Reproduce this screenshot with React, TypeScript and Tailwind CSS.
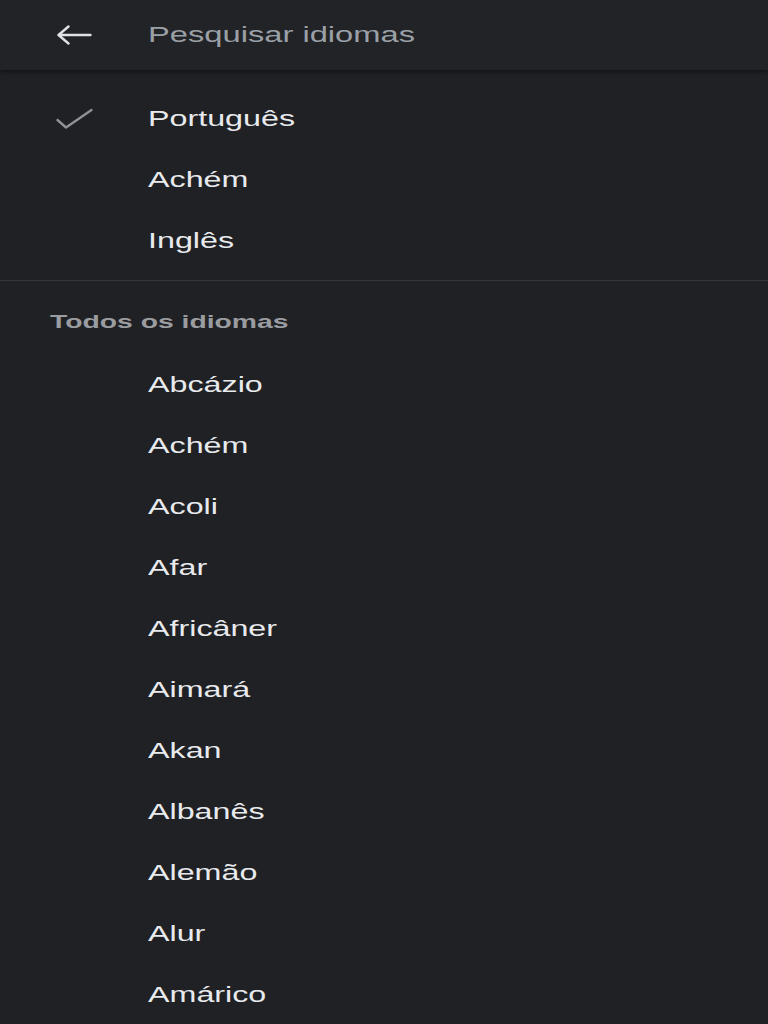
const topLanguages = [
  { name: "Português", selected: true },
  { name: "Achém", selected: false },
  { name: "Inglês", selected: false },
];

const allLanguages = [
  "Abcázio",
  "Achém",
  "Acoli",
  "Afar",
  "Africâner",
  "Aimará",
  "Akan",
  "Albanês",
  "Alemão",
  "Alur",
  "Amárico",
];

// the screenshot is stretched sideways, so text gets a horizontal scale
const Stretched = ({ children, className }: { children: React.ReactNode; className: string }) => (
  <span className={`inline-block origin-left whitespace-nowrap ${className}`}>{children}</span>
);

const LanguageRow = ({ name, selected }: { name: string; selected?: boolean }) => (
  <div className="flex h-[61px] items-center">
    <div className="flex w-[148px] shrink-0 items-center pl-[56px] pt-[4px]">
      {selected && (
        <svg width="37" height="22" viewBox="0 0 37 22" fill="none">
          <path d="M1.5 12 L10 19.5 L35.5 2" stroke="#8e9196" strokeWidth="2.4" strokeLinecap="round" strokeLinejoin="round" />
        </svg>
      )}
    </div>
    <div className="pt-[5px]">
      <Stretched className="scale-x-[1.5] text-[21.5px] text-[#e8eaed]">{name}</Stretched>
    </div>
  </div>
);

export default function App() {
  return (
    <div className="min-h-screen bg-[#202125] font-['Liberation_Sans',Arial,sans-serif]">
      <div className="relative z-10 flex h-[70px] items-center bg-[#222327] shadow-[0_2px_4px_rgba(0,0,0,0.45)]">
        <div className="flex w-[148px] shrink-0 items-center pl-[56px]">
          <svg width="36" height="20" viewBox="0 0 36 20" fill="none">
            <path d="M2.5 10 H34.5 M12.5 1.5 L2.5 10 L12.5 18.5" stroke="#dfe1e4" strokeWidth="2.4" strokeLinecap="round" strokeLinejoin="round" />
          </svg>
        </div>
        <Stretched className="scale-x-[1.52] text-[21.5px] text-[#9aa0a6]">Pesquisar idiomas</Stretched>
      </div>

      <div className="pt-[16px] pb-[11px]">
        {topLanguages.map((lang) => (
          <LanguageRow key={lang.name} name={lang.name} selected={lang.selected} />
        ))}
      </div>

      <div className="h-px bg-[#36373b]" />

      <div className="flex h-[71px] items-center pt-[10px] pl-[50px]">
        <Stretched className="scale-x-[1.53] text-[18.5px] font-bold text-[#9a9ca0]">Todos os idiomas</Stretched>
      </div>

      <div>
        {allLanguages.map((name, index) => (
          <LanguageRow key={index} name={name} />
        ))}
      </div>
    </div>
  );
}
